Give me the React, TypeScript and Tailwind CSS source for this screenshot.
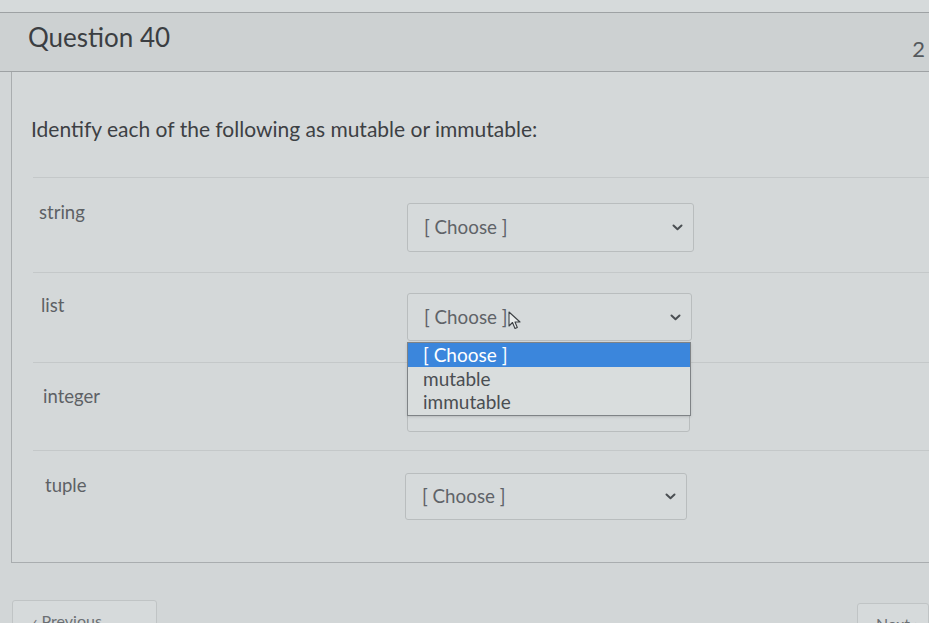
import React from "react";

const Chevron = () => (
  <svg width="11" height="7" viewBox="0 0 11 7" fill="none">
    <path d="M1.5 1.5 L5.5 5.2 L9.5 1.5" stroke="#4a4e52" strokeWidth="2" strokeLinecap="round" strokeLinejoin="round" />
  </svg>
);

const Select = ({ w, h, empty }: { w: string; h: string; empty?: boolean }) => (
  <div className={`${w} ${h} border border-[#b9bdbe] rounded-[3px] bg-[#d6dadb] flex items-center justify-between pl-[16px] pr-[10px]`}>
    {empty ? <span /> : <span className="text-[18.8px] text-[#5f6368]">[ Choose ]</span>}
    {empty ? <span /> : <Chevron />}
  </div>
);

export default function App() {
  return (
    <div className="w-[929px] h-[623px] overflow-hidden bg-[#d2d6d7] font-['Lato',sans-serif] relative">
      <div className="h-[12px] bg-[#d6dadb]" />
      <div className="h-[60px] border-t border-b border-[#9ea2a4] bg-[#cdd1d2] flex justify-between pl-[28px] pr-[4px]">
        <div className="pt-[5px] text-[26px] text-[#3b3e42]">Question 40</div>
        <div className="pt-[19px] text-[22px] text-[#55595d]">2</div>
      </div>
      <div className="ml-[11px] border-l border-b border-[#a9adaf] bg-[#d4d8d9] h-[491px]">
        <div className="pl-[19px] pt-[41px] text-[21px] text-[#3d4044] h-[105px]">
          Identify each of the following as mutable or immutable:
        </div>
        <div className="ml-[21px] border-t border-[#c4c8c9]">
          <div className="h-[94px] flex pl-[6px]">
            <div className="w-[368px] pt-[21px] text-[18.5px] text-[#5d6165]">string</div>
            <div className="pt-[25px]"><Select w="w-[287px]" h="h-[49px]" /></div>
          </div>
          <div className="h-[90px] flex pl-[8px] border-t border-[#c4c8c9] relative">
            <div className="w-[366px] pt-[19px] text-[18.5px] text-[#5d6165]">list</div>
            <div className="pt-[20px] relative">
              <Select w="w-[285px]" h="h-[48px]" />
              <svg className="absolute left-[101px] top-[38px]" width="14" height="20" viewBox="0 0 14 20">
                <path d="M1 1 L1 15 L4.5 11.5 L7 17.5 L9.3 16.5 L7 11 L12 11 Z" fill="#e9ecec" stroke="#3c4044" strokeWidth="1.1" strokeLinejoin="round" />
              </svg>
              <div className="absolute left-0 top-[69px] w-[284px] border border-[#7f8386] bg-[#d9dddd] z-10 text-[19px] leading-[23px] shadow-sm">
                <div className="bg-[#3b86dc] text-white pl-[15px] h-[24px]">[ Choose ]</div>
                <div className="text-[#4a4e52] pl-[15px]">mutable</div>
                <div className="text-[#4a4e52] pl-[15px] pb-[2px]">immutable</div>
              </div>
            </div>
          </div>
          <div className="h-[88px] flex pl-[10px] border-t border-[#c4c8c9]">
            <div className="w-[364px] pt-[20px] text-[18.5px] text-[#5d6165]">integer</div>
            <div className="pt-[21px]"><Select w="w-[283px]" h="h-[48px]" empty /></div>
          </div>
          <div className="flex pl-[12px] border-t border-[#c4c8c9]">
            <div className="w-[360px] pt-[21px] text-[18.5px] text-[#5d6165]">tuple</div>
            <div className="pt-[22px]"><Select w="w-[282px]" h="h-[47px]" /></div>
          </div>
        </div>
      </div>
      <div className="flex justify-between pt-[37px]">
        <div className="ml-[12px] w-[145px] h-[40px] border border-[#c0c4c5] rounded-[3px] bg-[#d6dadb] pl-[20px] pt-[8px] text-[16px] text-[#6b6f73]">‹ Previous</div>
        <div className="mt-[3px] w-[72px] h-[40px] border border-[#c0c4c5] rounded-[3px] bg-[#d6dadb] pl-[18px] pt-[8px] text-[16px] text-[#6b6f73]">Next ›</div>
      </div>
    </div>
  );
}
